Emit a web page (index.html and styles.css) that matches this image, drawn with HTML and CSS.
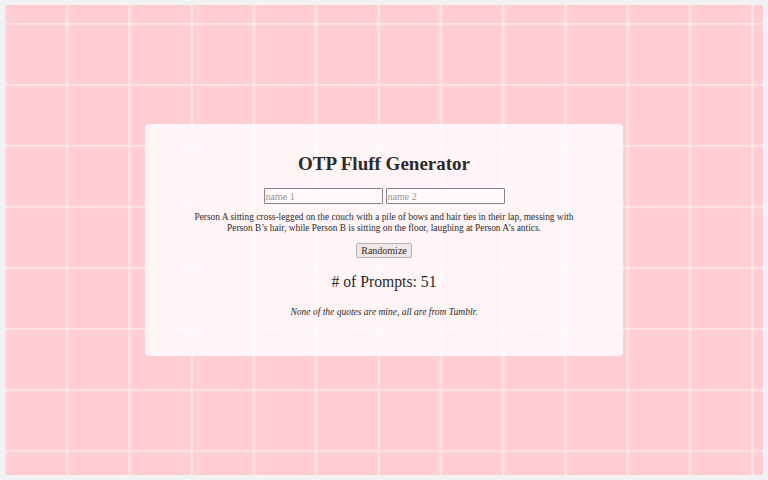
FILE: index.html
```html
<!DOCTYPE html>
<html lang="en">
<head>
<meta charset="utf-8">
<title>OTP Fluff Generator</title>
<link rel="stylesheet" href="styles.css">
</head>
<body>
<main class="page">
  <section class="card">
    <h1 class="title">OTP Fluff Generator</h1>
    <div class="names">
      <input class="name-input" type="text" placeholder="name 1">
      <input class="name-input" type="text" placeholder="name 2">
    </div>
    <p class="prompt">Person A sitting cross-legged on the couch with a pile of bows and hair ties in their lap, messing with Person B’s hair, while Person B is sitting on the floor, laughing at Person A’s antics.</p>
    <button class="randomize" type="button">Randomize</button>
    <h2 class="count"># of Prompts: 51</h2>
    <p class="credit">None of the quotes are mine, all are from Tumblr.</p>
  </section>
</main>
</body>
</html>
```

FILE: styles.css
```css
html, body {
  margin: 0;
  padding: 0;
}

body {
  background: #f2f2f4;
  padding: 5px;
  font-family: "Liberation Serif", "Times New Roman", serif;
  color: #2e2a2b;
}

/* pink graph-paper backdrop with soft pale lines */
.page {
  height: 470px;
  display: flex;
  align-items: center;
  justify-content: center;
  background-color: #ffcdd2;
  background-image:
    linear-gradient(to right,
      rgba(255, 240, 242, 0.25) 0, rgba(255, 240, 242, 0.65) 1px,
      rgba(255, 240, 242, 0.65) 2px, rgba(255, 240, 242, 0.25) 3px,
      transparent 4px),
    linear-gradient(to bottom,
      rgba(255, 240, 242, 0.25) 0, rgba(255, 240, 242, 0.65) 1px,
      rgba(255, 240, 242, 0.65) 2px, rgba(255, 240, 242, 0.25) 3px,
      transparent 4px);
  background-size: 62.3px 61px, 62.3px 61px;
  background-position: 60.5px 0, 0 17px;
}

.card {
  width: 478px;
  box-sizing: border-box;
  padding: 29px 20px 38px;
  background: rgba(255, 255, 255, 0.8);
  border-radius: 4px;
  text-align: center;
  display: flex;
  flex-direction: column;
  align-items: center;
}

.title {
  margin: 0;
  font-size: 19px;
  line-height: 22px;
  font-weight: bold;
}

.names {
  margin-top: 13px;
  display: flex;
  gap: 3px;
}

.name-input {
  width: 119px;
  height: 16px;
  box-sizing: border-box;
  margin: 0;
  padding: 0 1px;
  border: 1px solid #8d8385;
  border-radius: 1px;
  background: rgba(255, 255, 255, 0.4);
  font-family: "Liberation Serif", "Times New Roman", serif;
  font-size: 10px;
  color: #2e2a2b;
}

.name-input::placeholder {
  color: #9a9295;
}

.prompt {
  margin: 8px 0 0;
  max-width: 384px;
  font-size: 9.4px;
  line-height: 11px;
}

.randomize {
  margin-top: 9px;
  height: 15px;
  padding: 0 4px;
  border: 1px solid #b8aeb0;
  border-radius: 2px;
  background: #efe8e9;
  font-family: "Liberation Serif", "Times New Roman", serif;
  font-size: 10px;
  line-height: 13px;
  color: #2e2a2b;
}

.count {
  margin: 15px 0 0;
  font-size: 15.7px;
  line-height: 18px;
  font-weight: normal;
}

.credit {
  margin: 16px 0 0;
  font-size: 9.5px;
  line-height: 11px;
  font-style: italic;
}
```
